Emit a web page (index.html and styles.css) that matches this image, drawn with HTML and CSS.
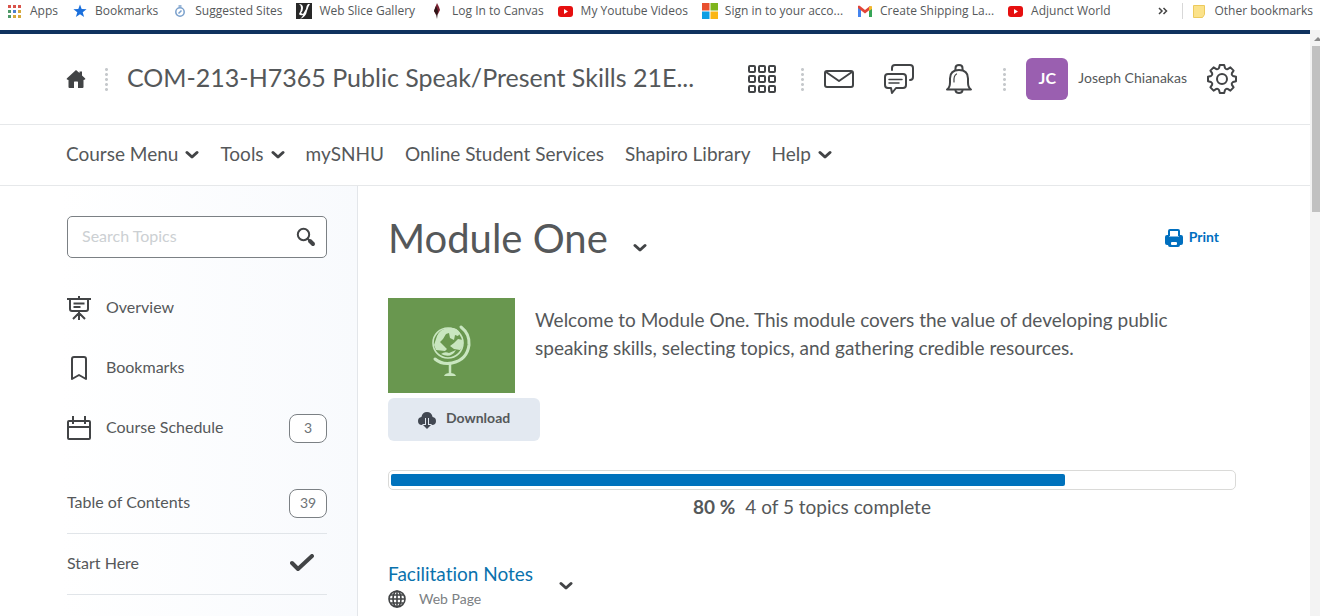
FILE: index.html
```html
<!DOCTYPE html>
<html lang="en">
<head>
<meta charset="utf-8">
<meta name="viewport" content="width=device-width, initial-scale=1">
<title>Module One</title>
<link rel="stylesheet" href="styles.css">
</head>
<body>
<nav class="bookmarks" aria-label="Bookmarks bar">
  <a class="bm" href="#"><svg class="bm-icon" viewBox="0 0 16 16"><path fill="#d9534a" d="M1 2h3v3H1zM6 2h3v3H6zM11 2h3v3h-3z"/><path fill="#4f9a68" d="M1 7h3v3H1z"/><path fill="#4c7fd0" d="M6 7h3v3H6z"/><path fill="#d5a93c" d="M11 7h3v3h-3zM6 12h3v3H6zM11 12h3v3h-3z"/><path fill="#4f9a68" d="M1 12h3v3H1z"/></svg>Apps</a>
  <a class="bm" href="#"><svg class="bm-icon" viewBox="0 0 16 16"><path fill="#1a6fdc" d="M8 1.500l1.700 4.600 4.900.2-3.900 3 1.400 4.800L8 11.300l-4.100 2.800 1.400-4.800-3.900-3 4.900-.2z"/></svg>Bookmarks</a>
  <a class="bm" href="#"><svg class="bm-icon" viewBox="0 0 16 16" fill="none" stroke="#7aa0cc" stroke-width="1.500"><circle cx="8" cy="9" r="4.200"/><path d="M6.500 3h3M6.500 10.500l3-3"/></svg>Suggested Sites</a>
  <a class="bm" href="#"><svg class="bm-icon" viewBox="0 0 16 16"><path fill="#282828" d="M0 0h16v16H0z"/><path fill="#fff" d="M3 1q4 0 4 4 0 3-2 5l2 1 3-5q0-3 2-5h2q-2 3-3 7-1 6-7 8 3-3 3-4-3 1-4-1 2-3 2-6 0-3-2-4z"/></svg>Web Slice Gallery</a>
  <a class="bm" href="#"><svg class="bm-icon" viewBox="0 0 16 16"><path fill="#7b2434" d="M8 0l2 4 1 3-2 4-2 1-2-4 1-3z"/><path fill="#2c1517" d="M7 3l2 5-1 8-1-5-2-3z"/></svg>Log In to Canvas</a>
  <a class="bm" href="#"><svg class="bm-icon" viewBox="0 0 16 16"><rect y="3" width="15" height="11" rx="3" fill="#e60f0f"/><path fill="#fff" d="M6 6l4 2.500L6 11z"/></svg>My Youtube Videos</a>
  <a class="bm" href="#"><svg class="bm-icon" viewBox="0 0 16 16"><path fill="#e8502f" d="M0 0h7.500v7.500H0z"/><path fill="#7eb51b" d="M8.500 0H16v7.500H8.500z"/><path fill="#0e9fe4" d="M0 8.500h7.500V16H0z"/><path fill="#fbb613" d="M8.500 8.500H16V16H8.500z"/></svg>Sign in to your acco...</a>
  <a class="bm" href="#"><svg class="bm-icon" viewBox="0 0 16 16"><path fill="#4484ee" d="M1 4l3 2v8H1z"/><path fill="#35a557" d="M12 6l3-2v10h-3z"/><path fill="#e24438" d="M1 3q1-1 2 0l5 4 5-4 2 2-7 5.500L1 5z"/><path fill="#f3b92b" d="M12 4q3-2 3 0v2l-3 2z"/></svg>Create Shipping La...</a>
  <a class="bm" href="#"><svg class="bm-icon" viewBox="0 0 16 16"><rect y="3" width="15" height="11" rx="3" fill="#e60f0f"/><path fill="#fff" d="M6 6l4 2.500L6 11z"/></svg>Adjunct World</a>
  <button class="bm bm-more" type="button" aria-label="More bookmarks"><svg width="10" height="8" viewBox="0 0 10 8" fill="none" stroke="#444" stroke-width="1.500"><path d="M1 1l3 3-3 3M5.500 1l3 3-3 3"/></svg></button>
  <a class="bm bm-other" href="#"><svg class="bm-icon" viewBox="0 0 16 16"><path fill="#fbe28a" stroke="#ecca5d" d="M2.500 2.500h11v9l-2 3h-9z"/></svg>Other bookmarks</a>
</nav>

<div class="viewport">
  <div class="page">
    <header class="header">
      <a class="home" href="#" aria-label="Home"><svg width="20" height="20" viewBox="0 0 20 20"><path fill="#424446" d="M10 1l3.500 3V2.500H16v4l3 2.800q.8.700 0 1.200L17.500 11v7q0 1-1 1H12v-6q0-.6-.6-.6H8.600q-.6 0-.6.600v6H3.500q-1 0-1-1v-7L1 10.500q-.8-.5 0-1.200z"/></svg></a>
      <span class="dots"></span>
      <a class="course label" href="#">COM-213-H7365 Public Speak/Present Skills 21E...</a>
      <div class="tools">
        <button class="icon-btn" type="button" aria-label="Select a course"><svg width="30" height="30" viewBox="0 0 30 30" fill="none" stroke="#424446" stroke-width="2"><g id="sq"><rect x="2" y="2" width="6" height="6" rx="1"/><rect x="12" y="2" width="6" height="6" rx="1"/><rect x="22" y="2" width="6" height="6" rx="1"/></g><use href="#sq" y="10"/><use href="#sq" y="20"/></svg></button>
        <span class="dots"></span>
        <div class="alerts">
          <button class="icon-btn" type="button" aria-label="Messages"><svg width="30" height="30" viewBox="0 0 30 30" fill="none" stroke="#424446" stroke-width="2" stroke-linejoin="round"><rect x="1" y="7" width="28" height="16" rx="2"/><path d="M2 8l13 9L28 8"/></svg></button>
          <button class="icon-btn" type="button" aria-label="Subscriptions"><svg width="30" height="30" viewBox="0 0 30 30" fill="none" stroke="#424446" stroke-width="2" stroke-linejoin="round" stroke-linecap="round"><path d="M8 6V4q0-3 3-3h15q3 0 3 3v9q0 3-3 3"/><path d="M4 10h15q3 0 3 3v8q0 3-3 3h-7l-4 5-1-5H4q-3 0-3-3v-8q0-3 3-3z"/><path stroke-width="1.500" d="M5 15.500h13M5 19h10"/></svg></button>
          <button class="icon-btn" type="button" aria-label="Updates"><svg width="30" height="30" viewBox="0 0 30 30" fill="none" stroke="#424446" stroke-width="2" stroke-linejoin="round" stroke-linecap="round"><path d="M3 25.500q3-2 3-7v-4Q6 6 15 6t9 8.500v4q0 5 3 7z"/><path d="M11.500 6V4q0-3 3.500-3t3.500 3v2M11.500 26.500q.5 2.500 3.500 2.500t3.500-2.500"/><path stroke-width="1.200" d="M12.500 10Q9.500 11.500 10 18"/></svg></button>
        </div>
        <span class="dots"></span>
        <button class="user" type="button"><span class="avatar"><span class="label">JC</span></span><span class="label">Joseph Chianakas</span></button>
        <button class="icon-btn" type="button" aria-label="Admin tools"><svg width="30" height="30" viewBox="-15 -15 30 30" fill="none" stroke="#424446" stroke-width="2" stroke-linejoin="round"><path id="cog" d="M0-14H2.200L3-11Q4.200-9.200 5.600-9.800L8.400-11.600 11.600-8.400 9.800-5.600Q9.200-4.200 11-3L14-2.200V0"/><use href="#cog" transform="rotate(90)"/><use href="#cog" transform="rotate(180)"/><use href="#cog" transform="rotate(270)"/><circle r="5"/></svg></button>
      </div>
    </header>

    <nav class="course-nav" aria-label="Course">
      <button class="nav-item" type="button"><span class="label">Course Menu</span><svg class="chev" viewBox="0 0 14 10"><path d="M2 2.500l5 4.500 5-4.500"/></svg></button>
      <button class="nav-item" type="button"><span class="label">Tools</span><svg class="chev" viewBox="0 0 14 10"><path d="M2 2.500l5 4.500 5-4.500"/></svg></button>
      <a class="nav-item" href="#"><span class="label">mySNHU</span></a>
      <a class="nav-item" href="#"><span class="label">Online Student Services</span></a>
      <a class="nav-item" href="#"><span class="label">Shapiro Library</span></a>
      <button class="nav-item" type="button"><span class="label">Help</span><svg class="chev" viewBox="0 0 14 10"><path d="M2 2.500l5 4.500 5-4.500"/></svg></button>
    </nav>

    <div class="content">
      <aside class="sidebar">
        <form class="search">
          <input class="search-input" type="search" placeholder="Search Topics" aria-label="Search Topics">
          <button class="icon-btn" type="button" aria-label="Search"><svg width="20" height="20" viewBox="0 0 20 20" fill="none" stroke="#424446"><circle cx="7.500" cy="7.500" r="5.700" stroke-width="2"/><path stroke-width="2" d="M11 11l3 3"/><path stroke-width="4" stroke-linecap="round" d="M14 14l3 3"/></svg></button>
        </form>
        <a class="side-link" href="#"><svg width="24" height="24" viewBox="0 0 24 24" fill="none" stroke="#424446" stroke-width="2"><path d="M0 3h24M12 0v3M3 3v10q0 2 2 2h14q2 0 2-2V3M6.500 7.500h11M6.500 11h7M12 15v9M12 17l-6 6M12 17l6 6"/></svg><span class="label">Overview</span></a>
        <a class="side-link" href="#"><svg width="24" height="24" viewBox="0 0 24 24" fill="none" stroke="#424446" stroke-width="2" stroke-linejoin="round"><path d="M5 3q0-2 2-2h10q2 0 2 2v20l-7-4-7 4z"/></svg><span class="label">Bookmarks</span></a>
        <a class="side-link" href="#"><svg width="24" height="24" viewBox="0 0 24 24" fill="none" stroke="#424446" stroke-width="2"><rect x="1" y="5" width="22" height="18" rx="1"/><path d="M1 11h22M6 0v8M18 0v8"/></svg><span class="label">Course Schedule</span><span class="count">3</span></a>
        <a class="side-row toc" href="#"><span class="label">Table of Contents</span><span class="count">39</span></a>
        <a class="side-row" href="#"><span class="label">Start Here</span><svg class="tick" width="24" height="20" viewBox="0 0 24 20" fill="none" stroke="#424446" stroke-width="4" stroke-linecap="round" stroke-linejoin="round"><path d="M2 9l6 6L22 2"/></svg></a>
      </aside>

      <main class="main">
        <div class="title-row">
          <button class="module-title" type="button"><h1>Module One</h1><svg class="chev" viewBox="0 0 14 10"><path d="M2 2.500l5 4.500 5-4.500"/></svg></button>
          <button class="print" type="button"><svg width="18" height="18" viewBox="0 0 18 18"><path fill="none" stroke="#006fbf" stroke-width="2" d="M4 7V2q0-1 1-1h8q1 0 1 1v5"/><path fill="#006fbf" fill-rule="evenodd" d="M2 6h2v1.500h10V6h2q2 0 2 2v6q0 2-2 2h-1q0 2-2 2H5q-2 0-2-2H2q-2 0-2-2V8q0-2 2-2zm5 7q-1 0-1 1v1q0 1 1 1h4q1 0 1-1v-1q0-1-1-1z"/></svg><span class="label">Print</span></button>
        </div>
        <div class="intro">
          <svg class="thumb" width="127" height="95" viewBox="0 0 127 95" role="img" aria-label="Globe"><path fill="#69974f" d="M0 0h127v95H0z"/><g fill="none" stroke="#c9e6c0" stroke-linecap="round"><circle cx="60" cy="45" r="15" stroke-width="1.600"/><path stroke-width="3" d="M73 29q9 7 8 18-2 15-17 18-10 2-17-4"/><path stroke-width="2.500" d="M62 66v10"/></g><path fill="#c9e6c0" d="M56 78q1-3 6-3t6 3zM49 38q3-7 11-8 9-1 12 5l-2 3-3-1-1 5-4-2-1-5-3 1-3 5-3 3 4 4 3 3-2 2-9-1-2-5zM66 45l4-4 5 1q1 6-3 10l-6-1-4-3zM53 56q4-3 8-1l7-3q-5 9-15 4z"/></svg>
          <p class="welcome">Welcome to Module One. This module covers the value of developing public speaking skills, selecting topics, and gathering credible resources.</p>
        </div>
        <button class="download" type="button"><svg width="18" height="18" viewBox="0 0 18 18"><path fill="#424852" d="M4 14q-4 0-4-4 0-3.500 3.400-4Q4.500 1 9 1t5.600 5Q18 6.500 18 10q0 4-4 4z"/><path fill="#e3e9f1" d="M7 7h4v6h3l-5 6-5-6h3z"/><path fill="#424852" d="M8 7h2v7h3l-4 4-4-4h3z"/></svg><span class="label">Download</span></button>
        <div class="progress" role="progressbar" aria-valuenow="80" aria-valuemin="0" aria-valuemax="100" aria-label="Topics complete"><div class="bar" style="width:80%"></div></div>
        <p class="summary"><strong>80 %</strong>4 of 5 topics complete</p>
        <div class="topic">
          <div>
            <a class="topic-link" href="#">Facilitation Notes</a>
            <div class="topic-type"><svg width="18" height="18" viewBox="0 0 18 18" fill="none" stroke="#424446" stroke-width="1.600"><circle cx="9" cy="9" r="8"/><ellipse cx="9" cy="9" rx="4" ry="8"/><path d="M9 1v16M1 9h16M2.500 5h13M2.500 13h13"/></svg>Web Page</div>
          </div>
          <button class="icon-btn" type="button" aria-label="Actions for Facilitation Notes"><svg class="chev" viewBox="0 0 14 10"><path d="M2 2.500l5 4.500 5-4.500"/></svg></button>
        </div>
      </main>
    </div>
  </div>
  <div class="scrollbar" aria-hidden="true"><svg width="8" height="16" viewBox="0 0 8 16"><path fill="#8a8a8a" d="M2 11l4-4 4 4z"/></svg><div class="scroll-thumb"></div></div>
</div>
</body>
</html>
```
FILE: styles.css
```css
* { box-sizing: border-box; }

body {
  margin: 0;
  height: 100vh;
  display: flex;
  flex-direction: column;
  overflow: hidden;
  background: #fff;
  color: #55585a;
  font-family: Lato, "Liberation Sans", sans-serif;
  font-size: 16px;
  font-variant-ligatures: none;
}

a { color: inherit; text-decoration: none; }
svg { display: block; flex: none; }
h1, p { margin: 0; font-weight: 400; }

button {
  padding: 0;
  border: 0;
  background: none;
  color: inherit;
  font: inherit;
  cursor: pointer;
}

.icon-btn { display: flex; flex: none; }

/* Optically centres Lato text beside an icon */
.label { padding-bottom: 4px; }

.chev {
  width: 14px;
  height: 10px;
  fill: none;
  stroke: #424446;
  stroke-width: 3;
  stroke-linecap: round;
  stroke-linejoin: round;
}

/* Bookmarks bar */
.bookmarks {
  flex: none;
  display: flex;
  align-items: center;
  gap: 14px;
  height: 30px;
  padding: 0 7px 8px;
  font: 12px/16px "Open Sans", "Liberation Sans", sans-serif;
  color: #55585a;
  white-space: nowrap;
}
.bm { display: flex; align-items: center; gap: 7px; }
.bm-icon { width: 16px; height: 16px; }
.bm-more { margin-left: auto; }
.bm-other { border-left: 1px solid #d8d8d8; padding-left: 8px; }

/* Page frame */
.viewport { flex: 1; min-height: 0; display: flex; }
.page {
  flex: 1;
  min-width: 0;
  display: flex;
  flex-direction: column;
  border-top: 4px solid #10325f;
}
.scrollbar {
  flex: none;
  width: 10px;
  padding-left: 2px;
  background: #f3f3f3;
}
.scroll-thumb { height: 166px; background: #c1c1c1; }

/* Header */
.header {
  flex: none;
  display: flex;
  align-items: center;
  gap: 19px;
  height: 91px;
  padding: 0 73px 0 66px;
  border-bottom: 1px solid #e6e8ea;
}
.dots {
  flex: none;
  width: 3px;
  height: 25px;
  background: radial-gradient(circle, #c6c9cc 1px, transparent 2px) 0 0 / 3px 5px;
}
.course { flex: 1; min-width: 0; font-size: 25px; line-height: 32px; white-space: nowrap; overflow: hidden; }
.tools { display: flex; align-items: center; gap: 20px; }
.tools > .icon-btn:first-child { margin-right: 4px; }
.alerts { display: flex; gap: 30px; margin-right: 9px; }
.user { display: flex; align-items: center; gap: 10px; font-size: 14px; }
.avatar {
  display: flex;
  align-items: center;
  justify-content: center;
  width: 42px;
  height: 42px;
  border-radius: 6px;
  background: #9a5fb0;
  color: #fff;
  font-size: 16px;
  font-weight: 700;
}

/* Course navigation */
.course-nav {
  flex: none;
  display: flex;
  align-items: center;
  gap: 21px;
  height: 61px;
  padding: 0 66px;
  border-bottom: 1px solid #e6e8ea;
  font-size: 19px;
}
.nav-item { display: flex; align-items: center; gap: 7px; white-space: nowrap; }

/* Sidebar */
.content { flex: 1; min-height: 0; display: flex; overflow: hidden; }
.sidebar {
  flex: none;
  width: 358px;
  padding: 30px 30px 0 67px;
  border-right: 1px solid #e3e6ea;
  background: linear-gradient(to right, #fff 60px, #f8fafd);
}
.search {
  display: flex;
  align-items: center;
  height: 42px;
  margin-bottom: 20px;
  padding: 0 10px 0 14px;
  border: 1px solid #7b8084;
  border-radius: 5px;
  background: #fff;
}
.search-input {
  flex: 1;
  min-width: 0;
  padding: 0 0 4px;
  border: 0;
  outline: 0;
  background: none;
  font: inherit;
}
.search-input::placeholder { color: #ccd0d3; }
.side-link { display: flex; align-items: center; gap: 15px; height: 60px; }
.count {
  width: 38px;
  margin-left: auto;
  padding-bottom: 2px;
  border: 1px solid #7b8084;
  border-radius: 8px;
  background: #fff;
  color: #6e7376;
  font-size: 14px;
  line-height: 25px;
  text-align: center;
}
.side-row { display: flex; align-items: center; height: 61px; border-bottom: 1px solid #e1e5e9; }
.toc { margin-top: 15px; }
.tick { margin: 0 13px 0 auto; }

/* Module */
.main { flex: 1; min-width: 0; padding: 28px 74px 0 30px; }
.title-row { display: flex; justify-content: space-between; align-items: center; margin-bottom: 36px; padding-right: 17px; }
.module-title { display: flex; align-items: center; gap: 25px; }
.module-title h1 { font-size: 40px; line-height: 48px; }
.module-title .chev { margin-top: 20px; }
.print { display: flex; align-items: center; gap: 6px; color: #006fbf; font-size: 14px; font-weight: 700; }
.intro { display: flex; gap: 20px; margin-bottom: 5px; }
.welcome { padding-top: 8px; font-size: 19px; line-height: 28px; }
.download {
  display: flex;
  align-items: center;
  gap: 10px;
  height: 43px;
  margin-bottom: 29px;
  padding: 0 30px;
  border-radius: 6px;
  background: #e3e9f1;
  font-size: 14px;
  font-weight: 700;
}
.progress { height: 20px; padding: 3px 2px; border: 1px solid #dadad8; border-radius: 5px; }
.bar { height: 100%; border-radius: 2px; background: #0072bc; }
.summary { margin: 5px 0 42px; font-size: 19px; line-height: 24px; text-align: center; }
.summary strong { margin-right: 10px; }
.topic { display: flex; align-items: center; gap: 26px; }
.topic-link { display: block; color: #0a72ad; font-size: 19px; line-height: 26px; }
.topic-type { display: flex; align-items: center; gap: 13px; color: #7c8083; font-size: 14px; line-height: 24px; }
```
